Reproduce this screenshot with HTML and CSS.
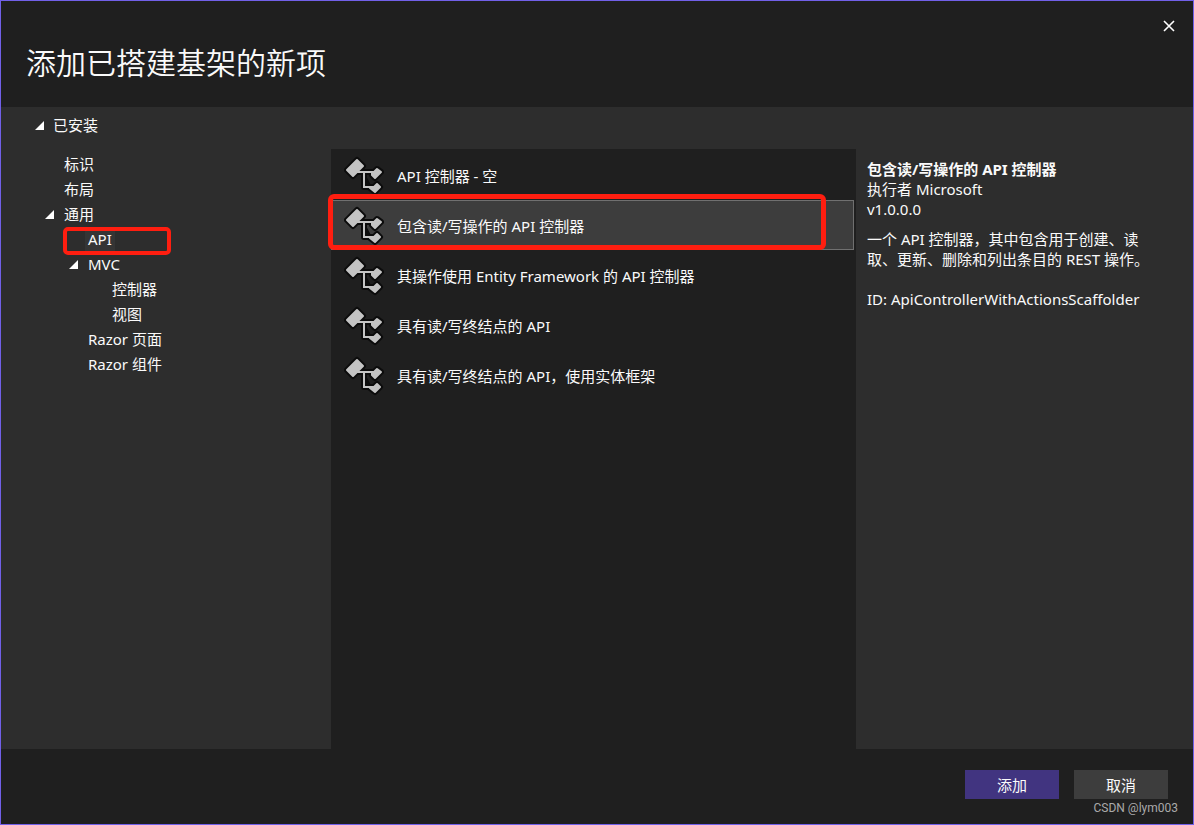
FILE: index.html
```html
<!DOCTYPE html>
<html lang="zh-CN">
<head>
<meta charset="utf-8">
<title>添加已搭建基架的新项</title>
<link rel="stylesheet" href="styles.css">
</head>
<body>
<svg class="defs" aria-hidden="true">
  <symbol id="scaffold" viewBox="0 0 40 40">
    <g class="icon-outline">
      <path d="M13 4L19 10L9 20L3 14Z"/>
      <path d="M14 16H31M20 16V31H28"/>
      <path d="M28 16H30L33 13L37 16L31 22L28 19Z"/>
      <path d="M26 32L28 31H30L33 28L36 31L31 36Z"/>
    </g>
    <path class="icon-line" d="M12 16H31M20 16V31H30"/>
    <g class="icon-fill">
      <path d="M13 4L19 10L9 20L3 14Z"/>
      <path d="M28 16H30L33 13L37 16L31 22L28 19Z"/>
      <path d="M26 32L28 31H30L33 28L36 31L31 36Z"/>
    </g>
  </symbol>
</svg>
<main class="dialog">
  <header class="header">
    <h1 class="title">添加已搭建基架的新项</h1>
    <button class="close" type="button" aria-label="关闭">
      <svg class="close-icon" viewBox="0 0 12 12"><path d="M1 1L11 11M11 1L1 11"/></svg>
    </button>
  </header>
  <div class="content">
    <nav class="sidebar">
      <div class="root"><svg class="arrow" viewBox="0 0 9 9"><path d="M9 0V9H0Z"/></svg>已安装</div>
      <ul class="tree">
        <li class="node">标识</li>
        <li class="node">布局</li>
        <li class="node"><svg class="arrow" viewBox="0 0 9 9"><path d="M9 0V9H0Z"/></svg>通用</li>
        <li class="node level2 marked"><span class="current">API</span></li>
        <li class="node level2"><svg class="arrow" viewBox="0 0 9 9"><path d="M9 0V9H0Z"/></svg>MVC</li>
        <li class="node level3">控制器</li>
        <li class="node level3">视图</li>
        <li class="node level2">Razor 页面</li>
        <li class="node level2">Razor 组件</li>
      </ul>
    </nav>
    <ul class="templates">
      <li><button class="template" type="button"><svg class="icon"><use href="#scaffold"/></svg>API 控制器 - 空</button></li>
      <li><button class="template selected" type="button"><svg class="icon"><use href="#scaffold"/></svg>包含读/写操作的 API 控制器</button></li>
      <li><button class="template" type="button"><svg class="icon"><use href="#scaffold"/></svg>其操作使用 Entity Framework 的 API 控制器</button></li>
      <li><button class="template" type="button"><svg class="icon"><use href="#scaffold"/></svg>具有读/写终结点的 API</button></li>
      <li><button class="template" type="button"><svg class="icon"><use href="#scaffold"/></svg>具有读/写终结点的 API，使用实体框架</button></li>
    </ul>
    <section class="details">
      <h2 class="details-title">包含读/写操作的 API 控制器</h2>
      <p class="line">执行者 Microsoft</p>
      <p class="line">v1.0.0.0</p>
      <p class="description">一个 API 控制器，其中包含用于创建、读取、更新、删除和列出条目的 REST 操作。</p>
      <p class="line">ID: ApiControllerWithActionsScaffolder</p>
    </section>
  </div>
  <footer class="footer">
    <button class="button primary" type="button">添加</button>
    <button class="button" type="button">取消</button>
    <span class="watermark">CSDN @lym003</span>
  </footer>
</main>
</body>
</html>
```

FILE: styles.css
```css
*, *::before, *::after { box-sizing: border-box; }

body {
  margin: 0;
  background: #1f1f1f;
  color: #fafafa;
  font: 15px/20px "Noto Sans", "Noto Sans CJK SC", sans-serif;
}

button {
  border: 0;
  color: inherit;
  font: inherit;
}

h1, h2, p, ul { margin: 0; padding: 0; }
ul { list-style: none; }
.defs { position: absolute; width: 0; height: 0; }

.dialog {
  display: flex;
  flex-direction: column;
  min-height: 100vh;
  border: 1px solid #7160e8;
}

.header {
  display: flex;
  justify-content: space-between;
  align-items: flex-start;
  padding: 14px 13px 22px 25px;
}
.title {
  padding-top: 25px;
  font-size: 30px;
  font-weight: 350;
  line-height: 45px;
}
.close {
  display: flex;
  padding: 5px;
  background: none;
}
.close-icon {
  width: 12px;
  height: 12px;
  fill: none;
  stroke: #fff;
  stroke-width: 1.6;
}

.content {
  flex: 1;
  display: grid;
  grid-template-columns: 330px 525px minmax(0, 1fr);
  background: #2d2d2d;
}

.sidebar { padding-top: 6px; }
.root { padding-left: 34px; line-height: 25px; }
.root .arrow { margin-right: 9px; }
.tree { padding-top: 14px; }
.node {
  position: relative;
  padding-left: 63px;
  line-height: 25px;
}
.level2 { padding-left: 87px; }
.level3 { padding-left: 111px; }
.arrow {
  width: 9px;
  height: 9px;
  vertical-align: 1px;
  fill: #fff;
}
.node .arrow { margin: 0 10px 0 -19px; }
.current {
  display: inline-block;
  margin-left: -3px;
  padding: 0 3px;
  background: #353535;
}
.marked::after {
  content: "";
  position: absolute;
  top: 0;
  left: 62px;
  width: 108px;
  height: 28px;
  border: 4px solid #ff1e10;
  border-radius: 5px;
}

.templates {
  margin-top: 42px;
  background: #1f1f1f;
}
.template {
  position: relative;
  display: flex;
  align-items: center;
  gap: 13px;
  width: calc(100% - 2px);
  height: 50px;
  padding: 2px 13px 0;
  background: none;
  text-align: left;
}
.templates li:first-child { padding-top: 1px; }
.template.selected {
  background: #3d3d3d;
  box-shadow: inset 0 0 0 1px #707070;
}
.template.selected::after {
  content: "";
  position: absolute;
  top: -6px;
  right: 28px;
  bottom: 0;
  left: -3px;
  border: 5px solid #ff1e10;
  border-radius: 6px;
}
.icon { width: 40px; height: 40px; overflow: visible; }
.icon-outline {
  fill: #0c0c0c;
  stroke: #0c0c0c;
  stroke-width: 6;
  stroke-linejoin: round;
}
.icon-line { fill: none; stroke: #c4c4c4; stroke-width: 2; }
.icon-fill {
  fill: #c4c4c4;
  stroke: #c4c4c4;
  stroke-width: 2;
  stroke-linejoin: round;
}

.details { padding: 52px 30px 0 11px; }
.details-title {
  font-size: 15px;
  font-weight: 700;
  line-height: 20px;
}
.description { padding: 10px 0 20px; }

.footer {
  position: relative;
  display: flex;
  justify-content: flex-end;
  gap: 15px;
  padding: 21px 25px 25px;
}
.button {
  width: 94px;
  height: 29px;
  padding: 0;
  background: #3d3d3d;
}
.primary { background: #413480; }
.watermark {
  position: absolute;
  right: 15px;
  bottom: 6px;
  color: #aaa;
  font: 12px/20px Roboto, "Liberation Sans", sans-serif;
}
```
